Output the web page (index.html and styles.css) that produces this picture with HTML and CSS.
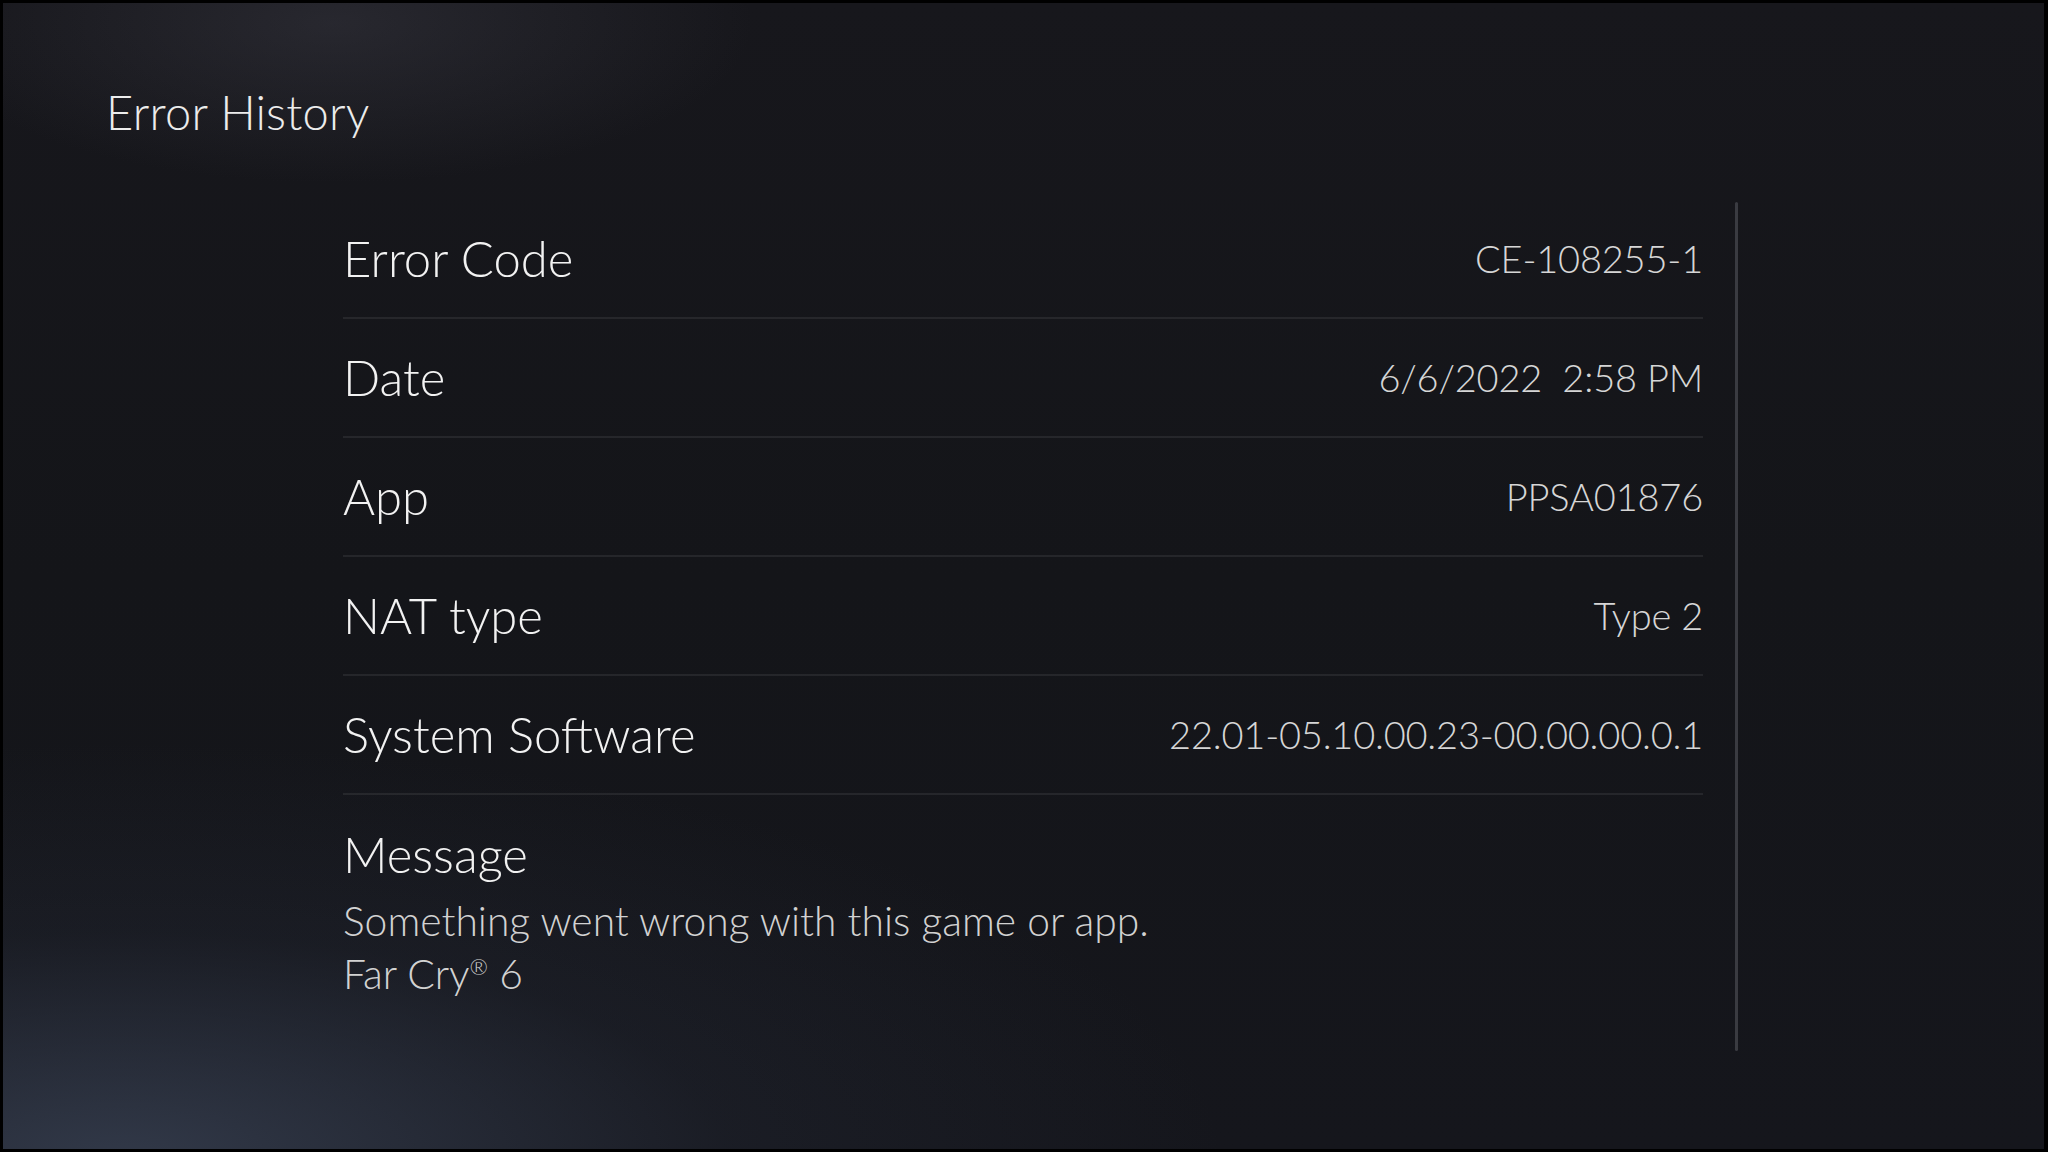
FILE: index.html
```html
<!DOCTYPE html>
<html lang="en">
<head>
<meta charset="utf-8">
<title>Error History</title>
<link rel="stylesheet" href="styles.css">
</head>
<body>
<div class="screen">
  <h1 class="title">Error History</h1>
  <div class="content">
    <div class="list">
      <div class="row"><span class="label">Error Code</span><span class="value">CE-108255-1</span></div>
      <div class="row"><span class="label">Date</span><span class="value">6/6/2022&nbsp;&nbsp;2:58 PM</span></div>
      <div class="row"><span class="label">App</span><span class="value">PPSA01876</span></div>
      <div class="row"><span class="label">NAT type</span><span class="value">Type 2</span></div>
      <div class="row"><span class="label">System Software</span><span class="value">22.01-05.10.00.23-00.00.00.0.1</span></div>
      <div class="message">
        <div class="label">Message</div>
        <p class="body">Something went wrong with this game or app.</p>
        <p class="body">Far Cry<sup class="reg">®</sup> 6</p>
      </div>
    </div>
    <div class="scrollbar"></div>
  </div>
</div>
</body>
</html>
```

FILE: styles.css
```css
html, body {
  margin: 0;
  padding: 0;
  background: #000;
}

body {
  width: 2048px;
  height: 1152px;
  padding: 3px 4px 3px 3px;
  box-sizing: border-box;
  font-family: "Lato", "Noto Sans", sans-serif;
  font-weight: 300;
}

.screen {
  width: 100%;
  height: 100%;
  overflow: hidden;
  background:
    radial-gradient(ellipse 420px 160px at 330px 20px, rgba(60, 60, 70, 0.45), rgba(60, 60, 70, 0) 100%),
    radial-gradient(ellipse 1100px 420px at 120px 1160px, rgba(62, 72, 92, 0.7), rgba(45, 52, 68, 0.22) 55%, rgba(30, 34, 44, 0) 100%),
    linear-gradient(180deg, #17171c 0%, #141519 50%, #15161c 100%);
  display: flex;
  flex-direction: column;
}

.title {
  margin: 0;
  padding: 81px 0 0 103px;
  font-size: 47px;
  line-height: 56px;
  font-weight: 300;
  color: #ececec;
  letter-spacing: 0.2px;
}

.content {
  display: flex;
  padding-left: 340px;
  margin-top: 60px;
}

.list {
  width: 1360px;
  display: flex;
  flex-direction: column;
}

.row {
  height: 119px;
  box-sizing: border-box;
  border-bottom: 2px solid rgba(255, 255, 255, 0.075);
  display: flex;
  justify-content: space-between;
  align-items: center;
  padding-bottom: 2px;
}

.label {
  font-size: 49px;
  line-height: 60px;
  color: #f2f2f2;
  font-weight: 300;
}

.value {
  font-size: 38px;
  line-height: 50px;
  color: #d6d6d6;
  font-weight: 300;
  letter-spacing: -0.2px;
}

.message {
  padding-top: 29px;
}

.message .label {
  margin-bottom: 10px;
}

.body {
  margin: 0;
  font-size: 40.8px;
  line-height: 53px;
  color: #d2d2d2;
  font-weight: 300;
}

.reg {
  font-size: 22px;
  vertical-align: 14px;
  line-height: 0;
}

.scrollbar {
  width: 3px;
  height: 849px;
  margin-left: 32px;
  margin-top: 2px;
  background: #3a3b41;
  border-radius: 2px;
}
```
